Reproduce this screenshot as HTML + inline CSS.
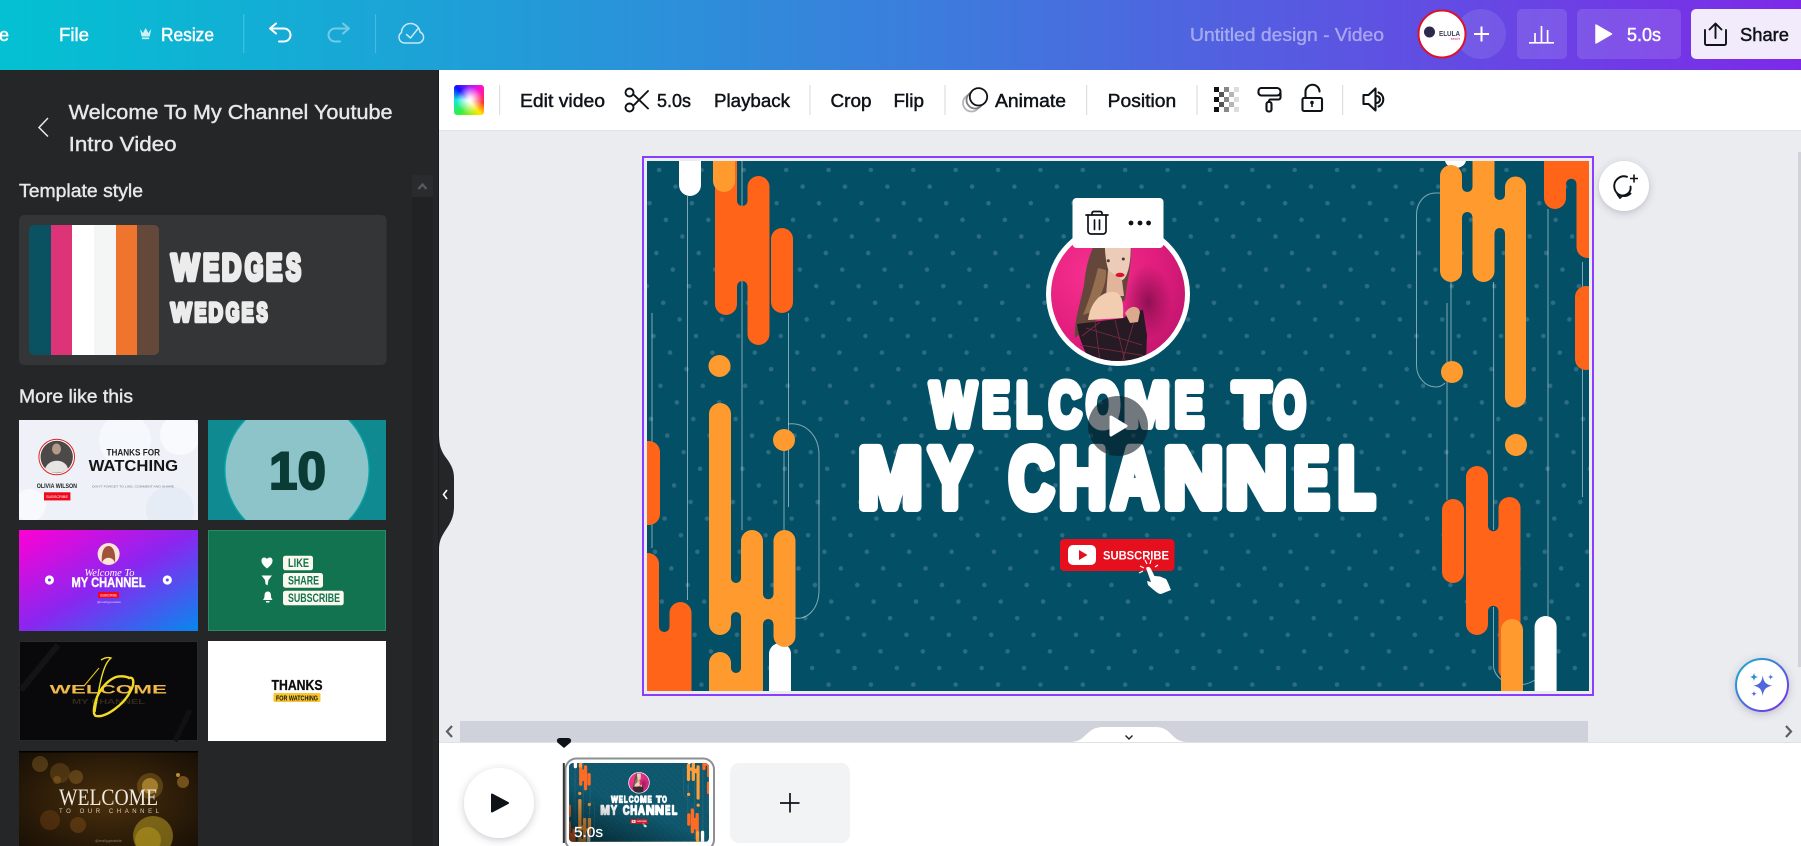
<!DOCTYPE html>
<html lang="en">
<head>
<meta charset="utf-8">
<title>Welcome To My Channel Youtube Intro Video</title>
<style>
html,body{margin:0;padding:0;width:1801px;height:846px;overflow:hidden;background:#ebecf0}
svg{position:absolute;left:0;top:0;display:block}
text{font-family:"Liberation Sans",sans-serif}
.d{fill:#0e1318;stroke:#0e1318;stroke-width:.45}
.w{fill:#fff;stroke:#fff;stroke-width:.45}
.l{fill:#e8e8e8;stroke:#e8e8e8;stroke-width:.4}
.s{fill:none;stroke:#0e1318;stroke-width:1.9;stroke-linecap:round;stroke-linejoin:round}
.sw{fill:none;stroke:#fff;stroke-width:2;stroke-linecap:round;stroke-linejoin:round}
.bub{fill:#fff;stroke:#fff;stroke-linejoin:round;font-weight:700}
.wd{fill:#ececec;stroke:#ececec;stroke-linejoin:round;font-weight:700}
.tl{stroke:#fff;stroke-opacity:.5;stroke-width:1;fill:none}
#sw{position:absolute;left:454px;top:85px;width:30px;height:30px;border-radius:3px;background:radial-gradient(circle at 52% 50%,#fff 0,rgba(255,255,255,.85) 15%,rgba(255,255,255,0) 62%),conic-gradient(from 0deg,#a020ff 0,#ff10d0 45deg,#ff3030 100deg,#ffe800 140deg,#30f040 215deg,#10e8e0 270deg,#1010ff 315deg,#a020ff 360deg)}
</style>
</head>
<body>
<svg xmlns="http://www.w3.org/2000/svg" width="1801" height="846" viewBox="0 0 1801 846">
<defs>
<linearGradient id="top" x1="0" x2="1" y1="0" y2="0"><stop offset="0" stop-color="#03c1d2"/><stop offset=".5" stop-color="#3a7fdc"/><stop offset="1" stop-color="#7d2ae8"/></linearGradient>
<clipPath id="cvc"><rect x="647" y="161" width="942" height="530"/></clipPath>
<clipPath id="avc"><circle cx="1118" cy="294" r="67"/></clipPath>
<radialGradient id="pink" cx=".3" cy=".35" r=".85"><stop offset="0" stop-color="#f6308f"/><stop offset=".6" stop-color="#e01d7c"/><stop offset="1" stop-color="#b8146a"/></radialGradient>
<radialGradient id="avs"><stop offset="0" stop-color="#6e0a40" stop-opacity=".7"/><stop offset="1" stop-color="#6e0a40" stop-opacity="0"/></radialGradient>
<pattern id="dots" patternUnits="userSpaceOnUse" x="647" y="161" width="42.37" height="514.6">
<path fill="none" stroke="#2d6c83" stroke-width="4.6" stroke-linecap="round" d="M12.1 9h0M28.5 25.6h0M2.53 42.2h0M18.93 58.8h0M35.33 75.4h0M9.36 92h0M25.76 108.6h0M42.16 125.2h0M-.21 125.2h0M16.19 141.8h0M32.59 158.4h0M6.62 175h0M23.02 191.6h0M39.42 208.2h0M13.45 224.8h0M29.85 241.4h0M3.88 258h0M20.28 274.6h0M36.68 291.2h0M10.71 307.8h0M27.11 324.4h0M1.14 341h0M43.51 341h0M17.54 357.6h0M33.94 374.2h0M7.97 390.8h0M24.37 407.4h0M40.77 424h0M-1.6 424h0M14.8 440.6h0M31.2 457.2h0M5.23 473.8h0M21.63 490.4h0M38.03 507h0"/>
</pattern>
<linearGradient id="g3" x1="0" y1="0" x2="1" y2="1"><stop offset="0" stop-color="#ff00d4"/><stop offset=".5" stop-color="#8a26f0"/><stop offset="1" stop-color="#0688ee"/></linearGradient>
<radialGradient id="g7" cx=".5" cy=".5" r=".75"><stop offset="0" stop-color="#4a2f0c"/><stop offset="1" stop-color="#130c05"/></radialGradient>
<linearGradient id="shd" x1="0" y1="1" x2=".7" y2="0"><stop offset="0" stop-color="#000" stop-opacity=".6"/><stop offset=".5" stop-color="#000" stop-opacity="0"/></linearGradient>
<linearGradient id="ring" x1="0" y1="0" x2="1" y2="1"><stop offset="0" stop-color="#14b4d0"/><stop offset="1" stop-color="#7d2ae8"/></linearGradient>
<filter id="sh" x="-30%" y="-30%" width="160%" height="160%"><feDropShadow dx="0" dy="2" stdDeviation="4" flood-color="#40475a" flood-opacity=".28"/></filter>
<clipPath id="t1"><rect x="19" y="420" width="179" height="100"/></clipPath>
</defs>

<rect width="1801" height="846" fill="#ebecf0"/>

<!-- top bar -->
<rect width="1801" height="70" fill="url(#top)"/>
<text x="-1" y="41" font-size="18" class="w">e</text>
<text x="59" y="41" font-size="18" class="w" textLength="30" lengthAdjust="spacingAndGlyphs">File</text>
<path d="M140 29l3 4 2.7-5 2.6 5 3-4-1.6 7.500h-8.100zM142 37.500h7.200v1.600h-7.200z" fill="#fff" fill-opacity=".8"/>
<text x="161" y="41" font-size="18" class="w" textLength="53" lengthAdjust="spacingAndGlyphs">Resize</text>
<path d="M243.700 14V53M375.500 14V53" stroke="#fff" stroke-opacity=".22" stroke-width="1.200"/>
<path class="sw" d="M276 23.500L270 28.500L276 33.500M270 28.500H284A6.500 6.500 0 0 1 284 41.500H279"/>
<path class="sw" opacity=".4" d="M343 23.500L349 28.500L343 33.500M349 28.500H335A6.500 6.500 0 0 0 335 41.500H340"/>
<path class="sw" opacity=".75" style="stroke-width:1.500" d="M404 43H418A5.700 5.700 0 0 0 420 32C419.500 27 415 23.500 410.500 23.500C405 23.500 401.500 28 401.500 32.500A5.800 5.800 0 0 0 404 43ZM406.500 34.500L410.500 38L418.500 28"/>
<text x="1190" y="41" font-size="18" fill="#fff" fill-opacity=".45" textLength="194" lengthAdjust="spacingAndGlyphs" stroke="#fff" stroke-opacity=".35" stroke-width=".35">Untitled design - Video</text>
<circle cx="1481" cy="34" r="25" fill="#fff" fill-opacity=".1"/>
<path d="M1481.500 26.500V41.500M1474 34H1489" stroke="#fff" stroke-width="2"/>
<circle cx="1442" cy="34" r="23.500" fill="#fff" stroke="#d8142c" stroke-width="2"/>
<circle cx="1429.500" cy="32" r="5.500" fill="#2b2a4c"/>
<text x="1439" y="36" font-size="7.500" font-weight="700" fill="#3c3c55" textLength="21" lengthAdjust="spacingAndGlyphs">ELULA</text>
<text x="1451" y="40" font-size="4" fill="#e0245e" textLength="9" lengthAdjust="spacingAndGlyphs">tech</text>
<rect x="1517" y="9" width="50" height="50" rx="5" fill="#fff" fill-opacity=".12"/>
<path d="M1529 42.800H1554M1535 42.800V33M1541.500 42.800V26M1547.600 42.800V30" stroke="#fff" stroke-width="1.700" fill="none"/>
<rect x="1577" y="9" width="104" height="50" rx="5" fill="#fff" fill-opacity=".12"/>
<path d="M1596 25L1611.500 34L1596 43Z" fill="#fff" stroke="#fff" stroke-width="1.500" stroke-linejoin="round"/>
<text x="1627" y="41" font-size="18" class="w" textLength="34" lengthAdjust="spacingAndGlyphs">5.0s</text>
<path d="M1696 9H1801V59H1696A5 5 0 0 1 1691 54V14A5 5 0 0 1 1696 9Z" fill="#f2ebfc"/>
<path class="s" d="M1705 30V43.500A1.500 1.500 0 0 0 1706.500 45H1724.500A1.500 1.500 0 0 0 1726 43.500V30M1715.500 38V23.500M1709.500 29.500L1715.500 23.500L1721.500 29.500"/>
<text x="1740" y="41" font-size="18" class="d" textLength="49" lengthAdjust="spacingAndGlyphs">Share</text>

<!-- toolbar -->
<rect x="439" y="70" width="1362" height="60" fill="#fff"/>
<rect x="439" y="130" width="1362" height="1" fill="#e3e4e8"/>
<path d="M499.600 85V115M810 85V115M945 85V115M1086.600 85V115M1197 85V115M1342.600 85V115" stroke="#dcdee2" stroke-width="1.200"/>
<text x="520" y="107" font-size="18" class="d" textLength="85" lengthAdjust="spacingAndGlyphs">Edit video</text>
<path class="s" d="M633.500 94.500L648 108.500M633.500 105.500L648 91"/>
<circle cx="629.500" cy="92.500" r="4" class="s"/><circle cx="629.500" cy="107.500" r="4" class="s"/>
<text x="657" y="107" font-size="18" class="d" textLength="34" lengthAdjust="spacingAndGlyphs">5.0s</text>
<text x="714" y="107" font-size="18" class="d" textLength="76" lengthAdjust="spacingAndGlyphs">Playback</text>
<text x="830.500" y="107" font-size="18" class="d" textLength="41" lengthAdjust="spacingAndGlyphs">Crop</text>
<text x="893.500" y="107" font-size="18" class="d" textLength="30.500" lengthAdjust="spacingAndGlyphs">Flip</text>
<circle cx="971.500" cy="103" r="8.500" fill="none" stroke="#b5b5b8" stroke-width="1.800"/>
<circle cx="975" cy="100" r="8.500" fill="#fff" stroke="#7d7d80" stroke-width="1.800"/>
<circle cx="978.500" cy="96.800" r="8.700" fill="#fff" stroke="#0e1318" stroke-width="1.800"/>
<text x="995" y="107" font-size="18" class="d" textLength="71" lengthAdjust="spacingAndGlyphs">Animate</text>
<text x="1107.700" y="107" font-size="18" class="d" textLength="68.500" lengthAdjust="spacingAndGlyphs">Position</text>
<g>
<rect x="1214" y="87" width="5" height="5" fill="#111"/><rect x="1214" y="97" width="5" height="5" fill="#111"/><rect x="1214" y="107" width="5" height="5" fill="#111"/>
<rect x="1219" y="92" width="5" height="5" fill="#555"/><rect x="1219" y="102" width="5" height="5" fill="#555"/>
<rect x="1224" y="87" width="5" height="5" fill="#888"/><rect x="1224" y="97" width="5" height="5" fill="#888"/><rect x="1224" y="107" width="5" height="5" fill="#888"/>
<rect x="1229" y="92" width="5" height="5" fill="#b5b5b5"/><rect x="1229" y="102" width="5" height="5" fill="#b5b5b5"/>
<rect x="1234" y="87" width="5" height="5" fill="#ddd"/><rect x="1234" y="97" width="5" height="5" fill="#ddd"/><rect x="1234" y="107" width="5" height="5" fill="#ddd"/>
</g>
<path class="s" style="stroke-width:2.100" d="M1261 88H1277A3.500 3.500 0 0 1 1280.500 91.500V92A3.500 3.500 0 0 1 1277 95.500H1261A3 3 0 0 1 1258.500 92V91A3 3 0 0 1 1261 88ZM1280.500 93V97.500A2 2 0 0 1 1278.500 99.500H1270.500A1.500 1.500 0 0 0 1269 101V102"/>
<rect x="1266.500" y="102" width="5" height="9.500" rx="2" class="s" style="stroke-width:2.100"/>
<rect x="1302.500" y="98" width="19.500" height="13" rx="1.500" class="s" style="stroke-width:2.100"/>
<path class="s" style="stroke-width:2.100" d="M1305.500 98V92A6.700 6.700 0 0 1 1319.500 91.500"/>
<circle cx="1312" cy="102.500" r="1.800" fill="#0e1318"/><path d="M1312 103V107" stroke="#0e1318" stroke-width="1.600"/>
<path class="s" style="stroke-width:2.100" d="M1363.500 95H1368.500L1375.500 88.500V110.500L1368.500 104H1363.500ZM1376.500 96A3.500 3.500 0 0 1 1376.500 103M1378.500 92.500A7.500 7.500 0 0 1 1378.500 106.500"/>

<!-- canvas -->
<rect x="643" y="157" width="950" height="538" fill="none" stroke="#8b3dff" stroke-width="2"/>
<g id="cv" clip-path="url(#cvc)">
<rect x="647" y="161" width="942" height="530" fill="#024f66"/>
<rect x="647" y="161" width="942" height="530" fill="url(#dots)"/>
<path class="tl" d="M687.500 196V600M652 313V548M742 161V530M788.500 313V507M784 443V530M1451 282V361M1447 303V500M1493.600 282V530M1548 209V617M1582.500 262V497"/>
<path class="tl" d="M788 424C806 422 819 436 819 455V590C819 608 808 620 795 618"/>
<path class="tl" d="M1440 193H1436C1424 193 1416.500 203 1416.500 215V365C1416.500 378 1426 387 1436 387C1440 387 1443 385 1445 383"/>
<path class="tl" d="M1493.500 607V667C1495 677 1505 685 1518 685C1525 685 1530 683 1535 680"/>
<ellipse cx="1455.500" cy="160" rx="10.500" ry="8" fill="#fff"/>
<path fill="#ff6418" d="M715 161V304a11 11 0 0 0 22 0V286.250a5.250 5.250 0 0 1 10.500 0V334a11 11 0 0 0 22 0V187a11 11 0 0 0-22 0V200.750a5.250 5.250 0 0 1-10.500 0V161Z"/>
<rect x="771" y="228" width="22" height="85" rx="11" fill="#ff6418"/>
<rect x="679" y="150" width="22" height="46" rx="11" fill="#fff"/>
<rect x="713" y="150" width="22" height="42" rx="11" fill="#ff9a2f"/>
<circle cx="719.500" cy="366" r="11" fill="#ff9a2f"/>
<rect x="638" y="441" width="22" height="84" rx="11" fill="#ff6418"/>
<path fill="#ff6418" d="M637 564a11 11 0 0 1 22 0V626.750a5.250 5.250 0 0 0 10.500 0V613a11 11 0 0 1 22 0V691H637Z"/>
<circle cx="784" cy="440" r="11" fill="#ff9a2f"/>
<rect x="769" y="643" width="22" height="60" rx="11" fill="#fff"/>
<path fill="#ff9a2f" d="M709 414a11 11 0 0 1 22 0V578a5 5 0 0 0 10 0V541a11 11 0 0 1 22 0V594a5.250 5.250 0 0 0 10.500 0V541a11 11 0 0 1 22 0V636a11 11 0 0 1-22 0V624.250a5.250 5.250 0 0 0-10.500 0V691H709V663a11 11 0 0 1 22 0V668a5 5 0 0 0 10 0V617a5 5 0 0 0-10 0V624a11 11 0 0 1-22 0Z"/>
<path fill="#ff9a2f" d="M1440 176V271a11 11 0 0 0 22 0V217.250a5.250 5.250 0 0 1 10.500 0V271a11 11 0 0 0 22 0V233.250a5.250 5.250 0 0 1 10.500 0V397a10.500 10.500 0 0 0 21 0V187a10.500 10.500 0 0 0-21 0V194.750a5.250 5.250 0 0 1-10.500 0V161H1472.500V186.750a5.250 5.250 0 0 1-10.500 0V176a11 11 0 0 0-22 0Z"/>
<path fill="#ff6418" d="M1544 161V198a11 11 0 0 0 22 0V184a5.250 5.250 0 0 1 10.500 0V247a11 11 0 0 0 22 0V161Z"/>
<rect x="1575" y="286" width="22" height="84" rx="11" fill="#ff6418"/>
<circle cx="1452" cy="372" r="11" fill="#ff9a2f"/>
<circle cx="1516" cy="445" r="11" fill="#ff9a2f"/>
<rect x="1442" y="499" width="22" height="84" rx="11" fill="#ff6418"/>
<path fill="#ff6418" d="M1466 477a11 11 0 0 1 22 0V526a5.250 5.250 0 0 0 10.500 0V508a11 11 0 0 1 22 0V691H1510L1498.500 672V611a5.250 5.250 0 0 0-10.500 0V624a11 11 0 0 1-22 0Z"/>
<rect x="1501" y="619" width="22" height="90" rx="11" fill="#ff9a2f"/>
<rect x="1534.600" y="616" width="22" height="90" rx="11" fill="#fff"/>
<!-- avatar -->
<circle cx="1118" cy="294" r="72" fill="#fff"/>
<circle cx="1118" cy="294" r="67" fill="url(#pink)"/>
<g clip-path="url(#avc)">
<ellipse cx="1148" cy="302" rx="24" ry="38" fill="url(#avs)"/>
<path d="M1103 232C1090 248 1086 265 1084 285C1080 305 1074 320 1075 338L1090 325L1125 300L1127 285C1130 270 1133 250 1130 232Z" fill="#64473a"/>
<path d="M1098 268C1094 285 1089 300 1083 315L1091 312C1099 300 1107 285 1106 270Z" fill="#a67c58" fill-opacity=".75"/>
<path d="M1105 232L1130 232C1132 252 1130 272 1124 279C1119 283 1112 280 1109 272C1106 264 1104 250 1105 232Z" fill="#ecccb8"/>
<path d="M1108 270L1122 280L1124 296L1106 296Z" fill="#e0b59c"/>
<circle cx="1108.300" cy="260.700" r="1.500" fill="#4a3a34"/><circle cx="1123.300" cy="259" r="1.500" fill="#4a3a34"/>
<ellipse cx="1120" cy="275" rx="4.500" ry="2.200" fill="#d8132d"/>
<path d="M1110 292C1122 290 1124 302 1123 318L1088 320C1090 305 1098 294 1110 292Z" fill="#f2cdb0"/>
<path d="M1077 324L1124 318L1130 312L1143 310L1147 335L1146 362L1090 362C1082 345 1078 335 1077 324Z" fill="#261b24"/>
<path d="M1086 328L1142 345M1095 322L1100 362M1115 320L1125 362M1080 345L1146 356M1135 318L1122 362M1082 336L1100 322" stroke="#7a2c40" stroke-width=".8" fill="none"/>
<path d="M1125 313C1130 305 1138 305 1140 312L1138 322L1130 323Z" fill="#dca98e"/>
</g>
<!-- title -->
<text y="426" font-size="62" stroke-width="8" class="bub" lengthAdjust="spacingAndGlyphs"><tspan x="930.400" textLength="45.600" lengthAdjust="spacingAndGlyphs">W</tspan><tspan x="982" textLength="27.700" lengthAdjust="spacingAndGlyphs">E</tspan><tspan x="1016.200" textLength="25.100" lengthAdjust="spacingAndGlyphs">L</tspan><tspan x="1049.100" textLength="32.200" lengthAdjust="spacingAndGlyphs">C</tspan><tspan x="1086.300" textLength="33.300" lengthAdjust="spacingAndGlyphs">O</tspan><tspan x="1124.400" textLength="45.200" lengthAdjust="spacingAndGlyphs">M</tspan><tspan x="1174.800" textLength="28.900" lengthAdjust="spacingAndGlyphs">E</tspan> <tspan x="1233.400" textLength="36.700" lengthAdjust="spacingAndGlyphs">T</tspan><tspan x="1273.400" textLength="32.200" lengthAdjust="spacingAndGlyphs">O</tspan></text>
<text y="507" font-size="84" stroke-width="10" class="bub"><tspan x="858.500" textLength="63.600" lengthAdjust="spacingAndGlyphs">M</tspan><tspan x="929" textLength="41" lengthAdjust="spacingAndGlyphs">Y</tspan> <tspan x="1009.300" textLength="44.400" lengthAdjust="spacingAndGlyphs">C</tspan><tspan x="1059.300" textLength="46.900" lengthAdjust="spacingAndGlyphs">H</tspan><tspan x="1111.500" textLength="46.500" lengthAdjust="spacingAndGlyphs">A</tspan><tspan x="1164.100" textLength="58.800" lengthAdjust="spacingAndGlyphs">N</tspan><tspan x="1225.900" textLength="60.800" lengthAdjust="spacingAndGlyphs">N</tspan><tspan x="1293.600" textLength="35.500" lengthAdjust="spacingAndGlyphs">E</tspan><tspan x="1338" textLength="36.700" lengthAdjust="spacingAndGlyphs">L</tspan></text>
<!-- subscribe -->
<rect x="1060" y="539" width="114.500" height="32" rx="4" fill="#e60f1e"/>
<rect x="1068" y="545" width="28" height="20" rx="5" fill="#fff"/>
<path d="M1079 550L1087.500 555L1079 560Z" fill="#e60f1e"/>
<text x="1103" y="559.500" font-size="12" font-weight="700" fill="#fff" textLength="66" lengthAdjust="spacingAndGlyphs">SUBSCRIBE</text>
<path d="M1146 568C1148 566 1150 567 1151 569L1154.500 576L1160 576.500L1166 579C1168 582 1170 588 1171 590L1161 594C1158 594 1155 591 1148 585L1147 581L1151 582Z" fill="#fff"/>
<path d="M1145 560L1147 564M1151 560L1150 564M1158 565L1155 567M1140 566L1144 568M1139 573L1143 571" stroke="#fff" stroke-width="1.200"/>
</g>

<!-- canvas overlays -->
<circle cx="1118" cy="426" r="30" fill="#0a1820" fill-opacity=".58"/>
<path d="M1111 417L1126 426L1111 435Z" fill="#fff" stroke="#fff" stroke-width="3" stroke-linejoin="round"/>
<rect x="1072.500" y="198" width="91" height="50" rx="4" fill="#fff"/>
<path class="s" style="stroke-width:1.700" d="M1086 215H1108M1092 215V213A2 2 0 0 1 1094 211.500H1100A2 2 0 0 1 1102 213V215M1088 215V231A3 3 0 0 0 1091 234H1103A3 3 0 0 0 1106 231V215M1094.500 220V229.500M1099.500 220V229.500"/>
<circle cx="1131" cy="223" r="2.400" fill="#0e1318"/><circle cx="1140" cy="223" r="2.400" fill="#0e1318"/><circle cx="1148.600" cy="223" r="2.400" fill="#0e1318"/>
<circle cx="1624" cy="186" r="25" fill="#fff" filter="url(#sh)"/>
<path class="s" d="M1627 176.800A9.800 9.800 0 1 0 1630.500 193.500M1630.500 186.500C1631.500 192 1627 195 1622.500 195.500L1620 198L1617.500 194.500"/>
<path d="M1634 174.500V182.500M1630 178.500H1638" stroke="#0e1318" stroke-width="1.600"/>
<circle cx="1762" cy="685" r="26" fill="#fff" stroke="url(#ring)" stroke-width="2" filter="url(#sh)"/>
<path d="M1762.700 675.500C1763.500 682 1766 684.800 1772.300 685.700C1766 686.600 1763.500 689.500 1762.700 696C1761.900 689.500 1759.500 686.600 1753.200 685.700C1759.500 684.800 1761.900 682 1762.700 675.500Z" fill="#4f66dc"/>
<path d="M1754 672.500C1754.300 675.500 1755.300 676.600 1758.500 677C1755.300 677.400 1754.300 678.500 1754 681.500C1753.700 678.500 1752.700 677.400 1749.500 677C1752.700 676.600 1753.700 675.500 1754 672.500Z" fill="#2b8fcc"/>
<path d="M1770.700 674C1771 676 1771.500 676.700 1773.700 677C1771.500 677.300 1771 678 1770.700 680C1770.400 678 1769.900 677.300 1767.700 677C1769.900 676.700 1770.400 676 1770.700 674Z" fill="#3e7ad4"/>
<path d="M1754 690.700C1754.300 692.700 1754.800 693.400 1757 693.700C1754.800 694 1754.300 694.700 1754 696.700C1753.700 694.700 1753.200 694 1751 693.700C1753.200 693.400 1753.700 692.700 1754 690.700Z" fill="#5a60dc"/>

<!-- scrollbars -->
<rect x="1798" y="152" width="3" height="515" fill="#d0d3da"/>
<rect x="460" y="721" width="1128" height="21" fill="#cfd2da"/>
<path d="M452 726L447 731.500L452 737" fill="none" stroke="#5c5f66" stroke-width="2.200"/>
<path d="M1786 726L1791 731.500L1786 737" fill="none" stroke="#5c5f66" stroke-width="2.200"/>

<!-- timeline -->
<rect x="439" y="742" width="1362" height="104" fill="#fff"/>
<rect x="439" y="742" width="1362" height="1" fill="#dfe1e5"/>
<path d="M1069 742C1080 742 1082 738 1088 733C1093 728 1098 727 1104 727H1155C1162 727 1166 729 1170 733C1175 738 1178 742 1189 742Z" fill="#fff"/>
<path d="M1125.500 735.500L1129 739L1132.500 735.500" fill="none" stroke="#222" stroke-width="1.400"/>
<circle cx="499" cy="803" r="35" fill="#fff" filter="url(#sh)"/>
<path d="M492 794.500L508 803L492 811.500Z" fill="#0e1318" stroke="#0e1318" stroke-width="2" stroke-linejoin="round"/>
<rect x="565.500" y="758.500" width="148.500" height="92" rx="11" fill="#fff" stroke="#8d8f95" stroke-width="2"/>
<clipPath id="thc"><rect x="569" y="763" width="140" height="79" rx="4"/></clipPath>
<g clip-path="url(#thc)">
<use href="#cv" transform="translate(569 763) scale(.14862) translate(-647 -161)"/>
<rect x="569" y="763" width="140" height="79" fill="#fff" fill-opacity=".05"/>
<rect x="569" y="763" width="140" height="79" fill="url(#shd)"/>
</g>
<rect x="562.800" y="763" width="2" height="80" fill="#333"/>
<path d="M564 748L557.500 742.500C556 740 557.500 738 560 738H568C570.500 738 572 740 570.500 742.500Z" fill="#0e1318"/>
<text x="574" y="837" font-size="15" fill="#fff" stroke="#fff" stroke-width=".2" textLength="29" lengthAdjust="spacingAndGlyphs">5.0s</text>
<rect x="730" y="763" width="120" height="80" rx="9" fill="#f2f3f5"/>
<path d="M790 793V812.500M780 803H799.500" stroke="#0e1318" stroke-width="1.700"/>

<!-- left panel -->
<rect x="0" y="70" width="439" height="776" fill="#252628"/>
<rect x="412" y="175" width="21" height="671" fill="#212224"/>
<rect x="412" y="175" width="21" height="22" fill="#2a2b2d"/>
<path d="M418.500 189L422.500 184.500L426.500 189" fill="none" stroke="#58595c" stroke-width="2.400"/>
<rect x="438" y="70" width="1" height="776" fill="#1a1b1c"/>
<path d="M439 433C439 446 441 451 447 459C452 466 454 471 454 478V507C454 516 451 522 447 528C441 537 439 541 439 550Z" fill="#252628"/>
<path d="M447 490L443.500 494.500L447 499" fill="none" stroke="#fff" stroke-width="1.600"/>
<path d="M48 118L39 127.500L48 136.500" fill="none" stroke="#e8e8e8" stroke-width="1.500"/>
<text x="68.600" y="119" font-size="20.500" class="l" textLength="324" lengthAdjust="spacingAndGlyphs">Welcome To My Channel Youtube</text>
<text x="68.600" y="151" font-size="20.500" class="l" textLength="108" lengthAdjust="spacingAndGlyphs">Intro Video</text>
<text x="19" y="197" font-size="18" class="l" textLength="124" lengthAdjust="spacingAndGlyphs">Template style</text>
<rect x="19" y="215" width="367.500" height="150" rx="5" fill="#343537"/>
<clipPath id="swc"><rect x="29" y="225" width="130" height="130" rx="5"/></clipPath>
<g clip-path="url(#swc)">
<rect x="29" y="225" width="22" height="130" fill="#0a5261"/>
<rect x="51" y="225" width="21" height="130" fill="#dd3477"/>
<rect x="72" y="225" width="22" height="130" fill="#fff"/>
<rect x="94" y="225" width="22" height="130" fill="#f4f6f5"/>
<rect x="116" y="225" width="21" height="130" fill="#ef742d"/>
<rect x="137" y="225" width="22" height="130" fill="#64493b"/>
</g>
<text y="279.750" font-size="37" stroke-width="4.500" class="wd"><tspan x="171.250" textLength="28" lengthAdjust="spacingAndGlyphs">W</tspan><tspan x="202.950" textLength="16.300" lengthAdjust="spacingAndGlyphs">E</tspan><tspan x="221.850" textLength="19.400" lengthAdjust="spacingAndGlyphs">D</tspan><tspan x="244.850" textLength="18.500" lengthAdjust="spacingAndGlyphs">G</tspan><tspan x="265.950" textLength="16.300" lengthAdjust="spacingAndGlyphs">E</tspan><tspan x="286" textLength="15" lengthAdjust="spacingAndGlyphs">S</tspan></text>
<text y="321.300" font-size="27" stroke-width="3.400" class="wd"><tspan x="170.700" textLength="20.900" lengthAdjust="spacingAndGlyphs">W</tspan><tspan x="194.400" textLength="12.200" lengthAdjust="spacingAndGlyphs">E</tspan><tspan x="208.500" textLength="14.500" lengthAdjust="spacingAndGlyphs">D</tspan><tspan x="225.700" textLength="13.800" lengthAdjust="spacingAndGlyphs">G</tspan><tspan x="241.500" textLength="12.200" lengthAdjust="spacingAndGlyphs">E</tspan><tspan x="256.500" textLength="11.200" lengthAdjust="spacingAndGlyphs">S</tspan></text>
<text x="19" y="402.500" font-size="18" class="l" textLength="114" lengthAdjust="spacingAndGlyphs">More like this</text>

<!-- T1 -->
<rect x="19" y="420" width="179" height="100" fill="#eef2f8"/>
<g clip-path="url(#t1)"><circle cx="30" cy="505" r="16" fill="#f7f9fc"/><circle cx="170" cy="510" r="24" fill="#e6ecf5"/><circle cx="125" cy="440" r="26" fill="#f5f8fc"/><circle cx="180" cy="435" r="20" fill="#f8fafd"/></g>
<circle cx="56.700" cy="457" r="17.800" fill="#fff" stroke="#e02020" stroke-width="1"/>
<circle cx="56.700" cy="457" r="16.200" fill="#4b4a48"/>
<ellipse cx="56.500" cy="449" rx="4.500" ry="5.500" fill="#b59a8a"/>
<path d="M45 469C48 458 66 458 68 469C62 474 50 474 45 469Z" fill="#e7e5e3"/>
<text x="106.500" y="455.300" font-size="9" font-weight="700" fill="#222" textLength="53.500" lengthAdjust="spacingAndGlyphs">THANKS FOR</text>
<text x="88.600" y="471" font-size="15.500" font-weight="700" fill="#151515" textLength="89.500" lengthAdjust="spacingAndGlyphs">WATCHING</text>
<text x="36.700" y="488" font-size="6" font-weight="700" fill="#222" textLength="40.300" lengthAdjust="spacingAndGlyphs">OLIVIA WILSON</text>
<text x="92" y="487.500" font-size="3" fill="#777" textLength="82" lengthAdjust="spacingAndGlyphs">DON'T FORGET TO LIKE, COMMENT AND SHARE</text>
<rect x="43.700" y="492" width="27" height="8.700" fill="#ee0a1e" stroke="#fff" stroke-width=".5"/>
<text x="46" y="498" font-size="4" fill="#fff" textLength="22" lengthAdjust="spacingAndGlyphs">SUBSCRIBE</text>
<!-- T2 -->
<clipPath id="t2"><rect x="208" y="420" width="178" height="100"/></clipPath>
<rect x="208" y="420" width="178" height="100" fill="#0f8a90"/>
<g clip-path="url(#t2)"><circle cx="297" cy="470" r="73" fill="#0aa0a4"/><circle cx="297" cy="470" r="71.500" fill="#8dc4c9"/></g>
<text x="269" y="489" font-size="53" font-weight="700" fill="#0b3b35" stroke="#0b3b35" stroke-width="2" textLength="57" lengthAdjust="spacingAndGlyphs">10</text>
<!-- T3 -->
<rect x="19" y="530" width="179" height="101" fill="url(#g3)"/>
<circle cx="108.600" cy="554" r="11" fill="#fbe4d8"/>
<path d="M102 563C101 552 104 546 108.500 546C113 546 116 552 115 563C113 556 104 556 102 563Z" fill="#a0523a"/>
<text x="84.500" y="576" font-size="11" fill="#fff" style="font-family:'Liberation Serif',serif;font-style:italic" textLength="50" lengthAdjust="spacingAndGlyphs">Welcome To</text>
<text x="71.500" y="587.200" font-size="14" font-weight="700" fill="#fff" stroke="#fff" stroke-width=".4" textLength="74" lengthAdjust="spacingAndGlyphs">MY CHANNEL</text>
<circle cx="49.400" cy="580" r="4.600" fill="#fff"/><circle cx="49.400" cy="580" r="1.500" fill="#8a26f0"/>
<circle cx="167.300" cy="580" r="4.600" fill="#fff"/><circle cx="167.300" cy="580" r="1.500" fill="#5a44f0"/>
<rect x="98" y="592" width="21" height="6" fill="#f0061e"/>
<text x="100" y="596.600" font-size="3.500" fill="#fff" textLength="17" lengthAdjust="spacingAndGlyphs">SUBSCRIBE</text>
<text x="97" y="603" font-size="3" fill="#e3c8ff" textLength="24" lengthAdjust="spacingAndGlyphs">@reallygreatsite</text>
<!-- T4 -->
<rect x="208" y="530" width="178" height="101" fill="#11734f"/>
<rect x="208.500" y="530.500" width="177" height="100" fill="none" stroke="#2c8a68" stroke-width="1"/>
<path d="M267 568.500C262 564.500 261.500 562.500 261.500 560.500C261.500 557 265.500 556.500 267 559C268.500 556.500 272.500 557 272.500 560.500C272.500 562.500 272 564.500 267 568.500Z" fill="#fff"/>
<path d="M261.500 575.500H272L268.500 580L267.500 585.500L265.500 584L265 580Z" fill="#fff"/>
<path d="M267.800 591.500C270.500 591.500 271 594 271 596C271 598 272 599 272.500 600H263C263.500 599 264.500 598 264.500 596C264.500 594 265 591.500 267.800 591.500ZM266 601H269.500V602.500H266Z" fill="#fff"/>
<rect x="283" y="555.700" width="30" height="14.600" rx="2.500" fill="#fbf8ee"/>
<rect x="283" y="573" width="40" height="14.700" rx="2.500" fill="#fbf8ee"/>
<rect x="283" y="590.700" width="60.700" height="14.600" rx="2.500" fill="#fbf8ee"/>
<text x="288" y="567" font-size="11.500" font-weight="700" fill="#11734f" textLength="21" lengthAdjust="spacingAndGlyphs">LIKE</text>
<text x="288" y="584.500" font-size="11.500" font-weight="700" fill="#11734f" textLength="31" lengthAdjust="spacingAndGlyphs">SHARE</text>
<text x="288" y="602" font-size="11.500" font-weight="700" fill="#11734f" textLength="52" lengthAdjust="spacingAndGlyphs">SUBSCRIBE</text>
<!-- T5 -->
<rect x="19.500" y="641.500" width="178" height="99" fill="#09090b" stroke="#2a2a2c" stroke-width="1"/>
<path d="M21 690L58 645" stroke="#141416" stroke-width="6"/>
<path d="M175 741L190 710" stroke="#111113" stroke-width="5"/>
<text x="49.700" y="693.500" font-size="12" font-weight="700" fill="#f0b94a" textLength="117.300" lengthAdjust="spacingAndGlyphs">WELCOME</text>
<text x="72" y="704" font-size="7" font-weight="700" fill="#32291a" textLength="73" lengthAdjust="spacingAndGlyphs">MY CHANNEL</text>
<path d="M129 678C134 676 135 684 130 692C124 704 106 718 96 716C93 715 93 708 97 697C101 688 108 680 116 677C120 676 126 676 129 678Z" fill="none" stroke="#f3dc25" stroke-width="2.400"/>
<path d="M101 660C104 658 108 657 111 658C106 662 103 670 100 684C98 694 96 704 95 712" fill="none" stroke="#f3dc25" stroke-width="1.400"/>
<path d="M99 668L84 686" stroke="#e8c820" stroke-width="1"/>
<!-- T6 -->
<rect x="208" y="641" width="178" height="100" fill="#fff"/>
<text x="271.500" y="690" font-size="15" font-weight="700" fill="#0e0e0e" stroke="#0e0e0e" stroke-width=".3" textLength="51" lengthAdjust="spacingAndGlyphs">THANKS</text>
<rect x="273.500" y="693" width="47" height="9" rx="1.500" fill="#f8c62e"/>
<text x="276" y="700.500" font-size="7" font-weight="700" fill="#151515" textLength="42" lengthAdjust="spacingAndGlyphs">FOR WATCHING</text>
<!-- T7 -->
<clipPath id="t7"><rect x="19" y="751" width="179" height="95"/></clipPath>
<g clip-path="url(#t7)">
<rect x="19" y="751" width="179" height="100" fill="url(#g7)"/>
<rect x="19" y="751" width="179" height="1.500" fill="#000"/>
<circle cx="40" cy="764" r="8" fill="#7a5a20" fill-opacity=".5"/><circle cx="60" cy="773" r="10" fill="#6e4c1a" fill-opacity=".5"/><circle cx="76" cy="777" r="7" fill="#8a6424" fill-opacity=".5"/>
<circle cx="150" cy="786" r="8" fill="#c29a3a" fill-opacity=".75"/><circle cx="150" cy="786" r="13" fill="#a9802c" fill-opacity=".35"/><circle cx="183" cy="782" r="6" fill="#a7762a" fill-opacity=".6"/>
<circle cx="57" cy="780" r="4" fill="#a07428" fill-opacity=".4"/><circle cx="50" cy="820" r="10" fill="#6a3e12" fill-opacity=".5"/><circle cx="78" cy="825" r="8" fill="#7c4a18" fill-opacity=".5"/>
<circle cx="153" cy="836" r="20" fill="#b49b20" fill-opacity=".55"/><circle cx="148" cy="840" r="13" fill="#c4a424" fill-opacity=".45"/><circle cx="178" cy="775" r="2" fill="#c08a30"/>
<text x="59" y="805" font-size="23" style="font-family:'Liberation Serif',serif" fill="#f0ebde" textLength="99" lengthAdjust="spacingAndGlyphs">WELCOME</text>
<text x="59" y="813" font-size="6" fill="#d8ccb6" textLength="100">TO OUR CHANNEL</text>
<text x="95" y="842" font-size="4" fill="#8d7a5a" textLength="27" lengthAdjust="spacingAndGlyphs">@reallygreatsite</text>
</g>
</svg>
<div id="sw"></div>
</body>
</html>
